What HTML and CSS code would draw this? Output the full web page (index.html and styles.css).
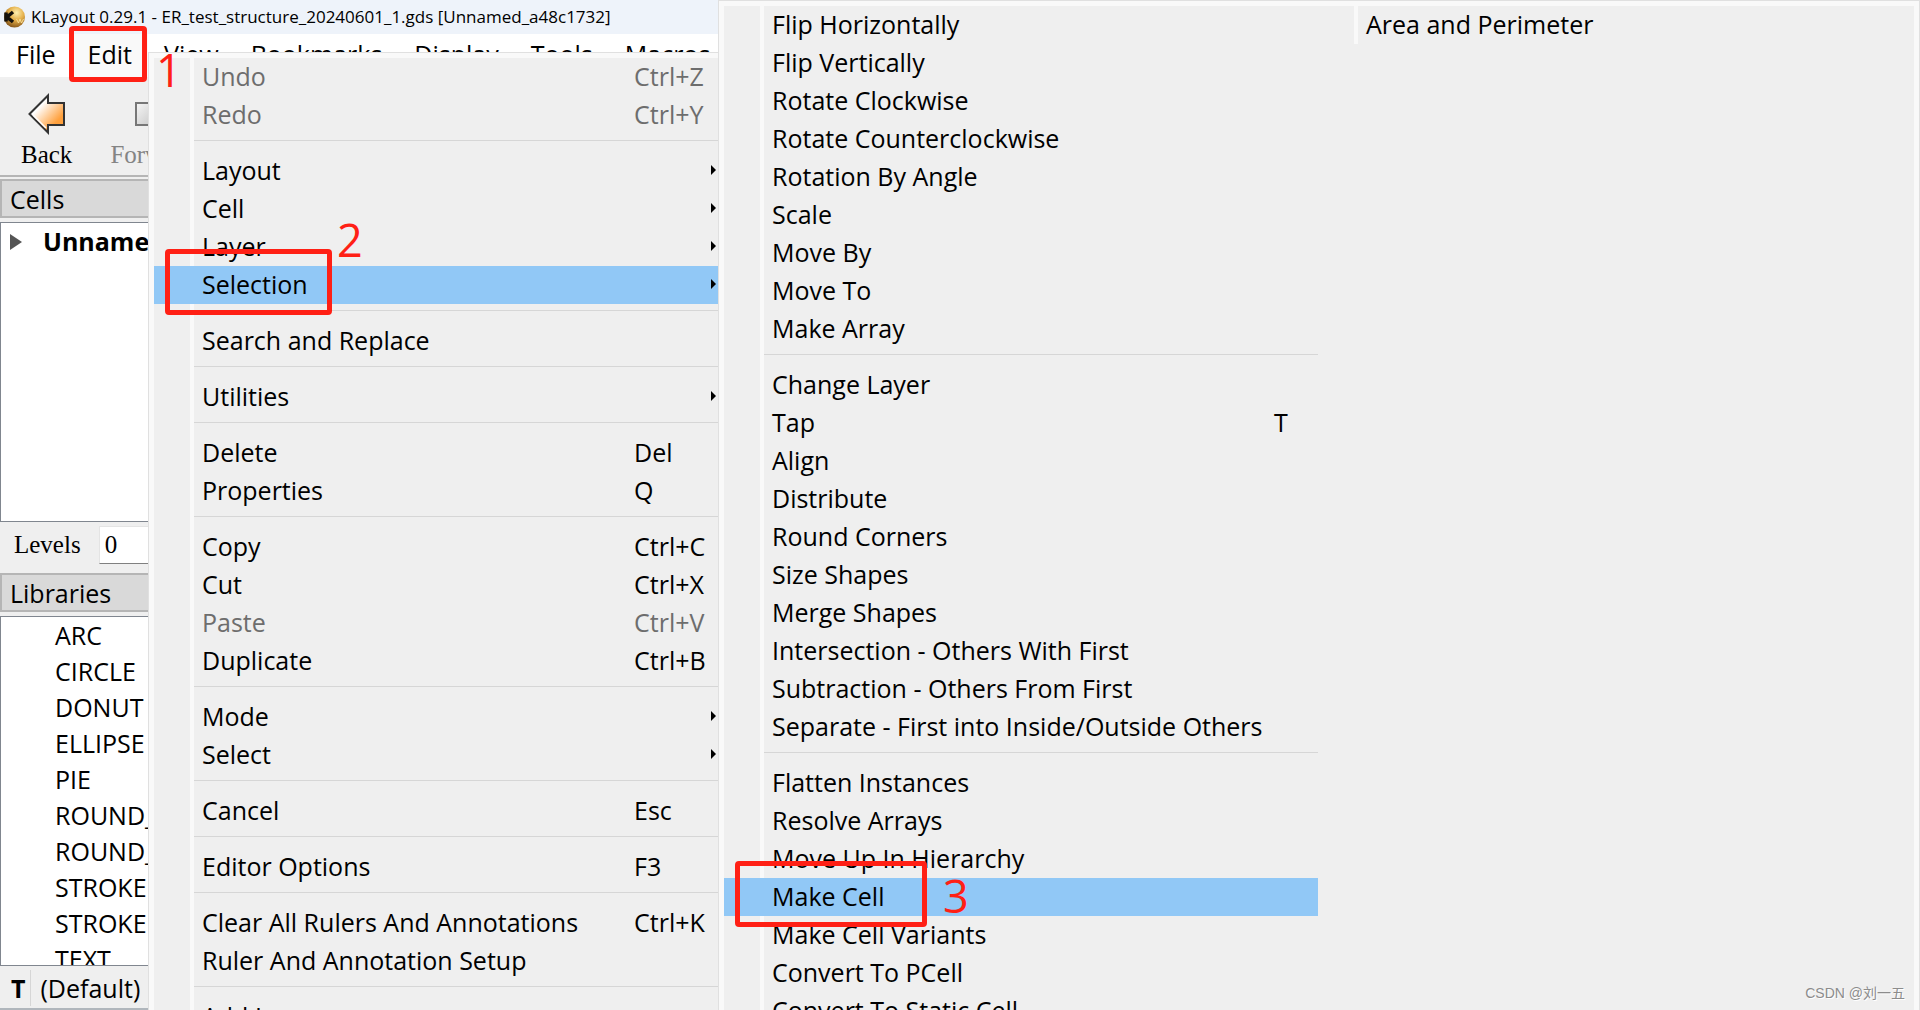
FILE: index.html
```html
<!DOCTYPE html>
<html lang="en">
<head>
  <meta charset="UTF-8">
  <meta name="viewport" content="width=device-width, initial-scale=1.0">
  <title>KLayout 0.29.1</title>
  <link rel="stylesheet" href="styles.css">
</head>
<body>
  <div class="window">
    <header class="titlebar">
      <svg class="logo" viewBox="0 0 24 24" aria-hidden="true">
        <defs>
          <radialGradient id="gold" cx="0.6" cy="0.3" r="0.7">
            <stop offset="0" stop-color="#fff0b0"/>
            <stop offset="0.5" stop-color="#e5b04a"/>
            <stop offset="1" stop-color="#8a5a1c"/>
          </radialGradient>
        </defs>
        <circle cx="12.5" cy="12" r="10.5" fill="url(#gold)"/>
        <path d="M4 7.500v9M11 7l-6 5 6 5" fill="none" stroke="#14110c" stroke-width="3.500"/>
        <path d="M14.500 14l2 4 1.500-4 1.500 4 2-4" fill="none" stroke="#f7dc95" stroke-width="1"/>
      </svg>
      <span>KLayout 0.29.1 - ER_test_structure_20240601_1.gds [Unnamed_a48c1732]</span>
    </header>

    <nav class="menubar">
      <button>File</button>
      <button class="open">Edit</button>
      <button>View</button>
      <button>Bookmarks</button>
      <button>Display</button>
      <button>Tools</button>
      <button>Macros</button>
    </nav>

    <div class="toolbar">
      <button>
        <svg viewBox="0 0 38 42" aria-hidden="true">
          <defs>
            <linearGradient id="orange" x1="0" y1="0" x2="1" y2="1">
              <stop offset="0.3" stop-color="#fff"/>
              <stop offset="0.75" stop-color="#ffa03c"/>
            </linearGradient>
          </defs>
          <path d="M1.500 21L20 2.500V10h16v22H20v7.500z" fill="url(#orange)" stroke="#333" stroke-width="2"/>
          <path d="M5 22L18 35" stroke="#fff" stroke-width="1.500"/>
        </svg>
        Back
      </button>
      <button disabled>
        <svg viewBox="0 0 38 42" aria-hidden="true">
          <defs>
            <linearGradient id="grey" x1="0" y1="0" x2="1" y2="1">
              <stop offset="0" stop-color="#fff"/>
              <stop offset="1" stop-color="#aaa"/>
            </linearGradient>
          </defs>
          <path d="M36.500 21L18 2.500V10H2v22h16v7.500z" fill="url(#grey)" stroke="#777" stroke-width="2"/>
        </svg>
        Forward
      </button>
    </div>

    <aside class="dock">
      <h2>Cells</h2>
      <div class="tree">
        <svg viewBox="0 0 12 16" aria-hidden="true"><path d="M0 0l12 8-12 8z" fill="#555"/></svg>
        <b>Unnamed_a48c1732</b>
      </div>
      <div class="levels">
        <label for="levels">Levels</label>
        <input id="levels" type="text" value="0">
      </div>
      <h2>Libraries</h2>
      <ul class="library">
        <li>ARC</li>
        <li>CIRCLE</li>
        <li>DONUT</li>
        <li>ELLIPSE</li>
        <li>PIE</li>
        <li>ROUND_PATH</li>
        <li>ROUND_POLYGON</li>
        <li>STROKED_BOX</li>
        <li>STROKED_POLYGON</li>
        <li>TEXT</li>
      </ul>
    </aside>

    <footer class="statusbar">
      <b>T</b>
      <span>(Default)</span>
    </footer>
  </div>

  <!-- Edit menu -->
  <div class="menu edit-menu">
    <div class="column">
      <button disabled>Undo<kbd>Ctrl+Z</kbd></button>
      <button disabled>Redo<kbd>Ctrl+Y</kbd></button>
      <hr>
      <button class="sub">Layout</button>
      <button class="sub">Cell</button>
      <button class="sub">Layer</button>
      <button class="sub active">Selection</button>
      <hr>
      <button>Search and Replace</button>
      <hr>
      <button class="sub">Utilities</button>
      <hr>
      <button>Delete<kbd>Del</kbd></button>
      <button>Properties<kbd>Q</kbd></button>
      <hr>
      <button>Copy<kbd>Ctrl+C</kbd></button>
      <button>Cut<kbd>Ctrl+X</kbd></button>
      <button disabled>Paste<kbd>Ctrl+V</kbd></button>
      <button>Duplicate<kbd>Ctrl+B</kbd></button>
      <hr>
      <button class="sub">Mode</button>
      <button class="sub">Select</button>
      <hr>
      <button>Cancel<kbd>Esc</kbd></button>
      <hr>
      <button>Editor Options<kbd>F3</kbd></button>
      <hr>
      <button>Clear All Rulers And Annotations<kbd>Ctrl+K</kbd></button>
      <button>Ruler And Annotation Setup</button>
      <hr>
      <button>Add Image</button>
    </div>
  </div>

  <!-- Selection submenu -->
  <div class="menu selection-menu">
    <div class="column">
      <button>Flip Horizontally</button>
      <button>Flip Vertically</button>
      <button>Rotate Clockwise</button>
      <button>Rotate Counterclockwise</button>
      <button>Rotation By Angle</button>
      <button>Scale</button>
      <button>Move By</button>
      <button>Move To</button>
      <button>Make Array</button>
      <hr>
      <button>Change Layer</button>
      <button>Tap<kbd>T</kbd></button>
      <button>Align</button>
      <button>Distribute</button>
      <button>Round Corners</button>
      <button>Size Shapes</button>
      <button>Merge Shapes</button>
      <button>Intersection - Others With First</button>
      <button>Subtraction - Others From First</button>
      <button>Separate - First into Inside/Outside Others</button>
      <hr>
      <button>Flatten Instances</button>
      <button>Resolve Arrays</button>
      <button>Move Up In Hierarchy</button>
      <button class="active">Make Cell</button>
      <button>Make Cell Variants</button>
      <button>Convert To PCell</button>
      <button>Convert To Static Cell</button>
    </div>
    <div class="column">
      <button>Area and Perimeter</button>
    </div>
  </div>

  <!-- Step markers -->
  <div class="mark mark-edit"><span>1</span></div>
  <div class="mark mark-selection"><span>2</span></div>
  <div class="mark mark-make-cell"><span>3</span></div>

  <div class="watermark">CSDN @刘一五</div>
</body>
</html>
```
FILE: styles.css
```css
:root {
  --panel: #efefef;
  --light: #f9f9f9;
  --edge: #e0e0e0;
  --line: #d6d6d6;
  --active: #91c8f6;
  --red: #ff2015;
  --row: 38px;
}

* { box-sizing: border-box; }

body {
  margin: 0;
  height: 100vh;
  overflow: hidden;
  position: relative;
  background: var(--panel);
  color: #000;
  font: 25px/36px "Open Sans", "Noto Sans", sans-serif;
}

button {
  border: 0;
  padding: 0;
  background: none;
  color: inherit;
  font: inherit;
  text-align: left;
  white-space: nowrap;
}
button:disabled { color: #6d6d6d; }

/* Main window */
.window { height: 100%; display: flex; flex-direction: column; }

.titlebar {
  display: flex;
  align-items: center;
  gap: 5px;
  height: 34px;
  padding-left: 2px;
  background: #eef3fa;
  font-size: 17px;
}
.logo { width: 24px; height: 24px; }

.menubar { display: flex; height: 45px; background: #fff; border-bottom: 2px solid #f0f0f0; }
.menubar button { padding: 0 16px 3px; }
.menubar .open { background: var(--light); }

.toolbar {
  display: flex;
  gap: 16px;
  height: 98px;
  padding: 14px 10px 0;
  border-bottom: 2px solid #b5b5b5;
  font: 25px/40px "Liberation Serif", serif;
}
.toolbar button { display: flex; flex-direction: column; align-items: center; padding: 0 11px; }
.toolbar button:disabled { color: #848484; }
.toolbar svg { width: 38px; height: 42px; }

.dock { flex: 1; min-height: 0; width: 400px; display: flex; flex-direction: column; padding-top: 2px; }
.dock h2 {
  flex: none;
  margin: 0;
  height: 39px;
  padding-left: 8px;
  border: 2px solid #b5b5b5;
  background: #d9d9d9;
  font-size: 25px;
  font-weight: 400;
}
.tree, .library { border: 1px solid #80868f; background: #fff; }
.tree {
  flex: none;
  height: 300px;
  margin-top: 4px;
  padding-left: 9px;
  display: flex;
  align-items: flex-start;
  gap: 21px;
}
.tree svg { width: 12px; height: 16px; margin-top: 11px; }

.levels { display: flex; align-items: center; gap: 18px; height: 51px; padding: 0 0 6px 14px; }
.levels label { font: 25px "Liberation Serif", serif; }
.levels input {
  width: 200px;
  height: 38px;
  padding: 0 5px;
  border: 1px solid #e4e4e4;
  border-bottom-color: #808080;
  font: 25px "Liberation Serif", serif;
}

.library {
  flex: 1;
  min-height: 0;
  margin: 4px 0 0;
  padding: 0 0 0 54px;
  list-style: none;
  overflow: hidden;
}

.statusbar { display: flex; height: 44px; padding: 4px 0 0 11px; border-bottom: 2px solid #b0b6bc; }
.statusbar span { height: 36px; margin-left: 5px; padding-left: 9px; border-left: 1px solid var(--line); }

/* Menus */
.menu {
  position: absolute;
  bottom: 0;
  display: flex;
  align-items: flex-start;
  overflow: hidden;
  padding: 5px 0 0 5px;
  border: 1px solid var(--edge);
  border-bottom: 0;
  background: var(--panel);
  box-shadow: inset 5px 5px var(--light);
}
.edit-menu { left: 148px; top: 52px; width: 571px; }
.selection-menu { left: 718px; right: 0; top: 0; }
.selection-menu::after { content: ""; position: absolute; top: 0; right: 0; bottom: 0; width: 5px; background: var(--light); }

.column { flex: 1; background: linear-gradient(var(--light), var(--light)) 36px 0 / 4px 100% no-repeat; }
.selection-menu .column { flex: 0 0 594px; }

.menu button { display: flex; align-items: center; width: 100%; height: var(--row); padding: 0 0 2px 48px; }
.menu .active { background: var(--active); }
.menu hr { height: 18px; margin: 0 0 0 40px; border: 0; background: linear-gradient(var(--line), var(--line)) 0 6px / 100% 1px no-repeat; }

.menu kbd { width: 84px; margin-left: auto; font: inherit; }
.selection-menu kbd { width: 44px; }

.sub::after {
  content: "";
  margin: 0 2px 0 auto;
  border: 5px solid transparent;
  border-left-color: #000;
  border-right: 0;
}

/* Step markers */
.mark { position: absolute; border: 5px solid var(--red); border-radius: 4px; }
.mark span { position: absolute; left: 100%; color: var(--red); font: 45px/44px "Open Sans", sans-serif; }
.mark-edit { left: 69px; top: 26px; width: 78px; height: 56px; }
.mark-edit span { margin: 17px 0 0 14px; }
.mark-selection { left: 165px; top: 249px; width: 167px; height: 66px; }
.mark-selection span { margin: -36px 0 0 10px; }
.mark-make-cell { left: 735px; top: 861px; width: 192px; height: 66px; }
.mark-make-cell span { margin: 8px 0 0 21px; }

.watermark {
  position: absolute;
  right: 15px;
  bottom: 6px;
  color: #8c8c8c;
  font: 14px/22px "Liberation Sans", "Noto Sans CJK SC", sans-serif;
  text-shadow: 1px 1px #fff;
}
```
